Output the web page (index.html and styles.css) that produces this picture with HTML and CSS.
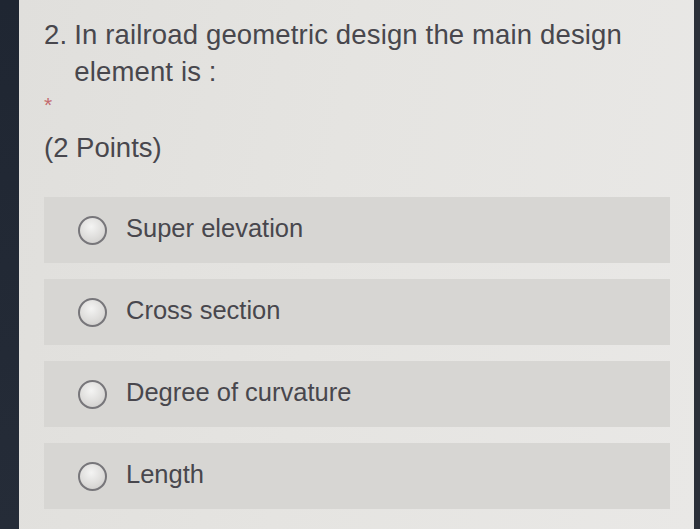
FILE: index.html
```html
<!DOCTYPE html>
<html lang="en">
<head>
<meta charset="utf-8">
<title>Question 2</title>
<link rel="stylesheet" href="styles.css">
</head>
<body>
<div class="frame">
  <div class="edge edge-left"></div>
  <main class="sheet">
    <div class="question">
      <span class="qnum">2.</span>
      <span class="qtext">In railroad geometric design the main design element is :</span>
    </div>
    <div class="required">*</div>
    <div class="points">(2 Points)</div>
    <div class="options">
      <label class="option"><span class="radio"></span><span class="label">Super elevation</span></label>
      <label class="option"><span class="radio"></span><span class="label">Cross section</span></label>
      <label class="option"><span class="radio"></span><span class="label">Degree of curvature</span></label>
      <label class="option"><span class="radio"></span><span class="label">Length</span></label>
    </div>
  </main>
  <div class="edge edge-right"></div>
</div>
</body>
</html>
```
FILE: styles.css
```css
html, body {
  margin: 0;
  padding: 0;
  width: 700px;
  height: 529px;
  overflow: hidden;
  background: #232a35;
}
.frame {
  display: flex;
  width: 700px;
  height: 529px;
}
.edge {
  flex: none;
  background: linear-gradient(180deg, #1f2632 0%, #252c38 100%);
}
.edge-left { width: 19px; }
.edge-right { width: 6px; background: #2b3039; }
.sheet {
  flex: 1;
  background: linear-gradient(100deg, #e0dfdc 0%, #e5e4e1 45%, #e9e8e6 100%);
  padding: 16px 0 0 25px;
  font-family: "Liberation Sans", Arial, Helvetica, sans-serif;
  color: #48474d;
  box-sizing: border-box;
}
.question {
  display: flex;
  font-size: 27.5px;
  line-height: 37px;
  letter-spacing: 0.15px;
  width: 600px;
}
.qnum {
  flex: none;
  margin-right: 7px;
}
.required {
  margin-top: 5px;
  font-size: 21px;
  line-height: 20px;
  color: #c46a6e;
}
.points {
  margin-top: 15px;
  font-size: 27.5px;
  line-height: 36px;
}
.options {
  margin-top: 31px;
  display: flex;
  flex-direction: column;
  gap: 16px;
  width: 626px;
}
.option {
  display: flex;
  align-items: center;
  height: 66px;
  padding-left: 34px;
  background: #d7d6d3;
  box-sizing: border-box;
}
.radio {
  flex: none;
  width: 25px;
  height: 25px;
  border-radius: 50%;
  border: 2px solid #77767a;
  background: radial-gradient(circle at 45% 35%, #f4f4f3 0%, #dcdbd9 60%, #c9c8c6 100%);
  margin-right: 19px;
}
.label {
  font-size: 25.5px;
  line-height: 30px;
  margin-top: -4px;
}
```
